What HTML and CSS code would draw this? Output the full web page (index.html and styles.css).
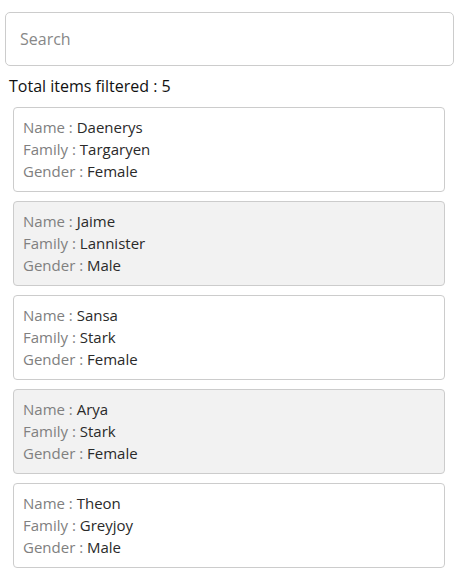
FILE: index.html
```html
<!DOCTYPE html>
<html lang="en">
<head>
  <meta charset="UTF-8">
  <title>Characters</title>
  <link rel="stylesheet" href="styles.css">
</head>
<body>
  <div class="app">
    <input class="search" type="text" placeholder="Search">

    <div class="total">Total items filtered : 5</div>

    <div class="list">
      <div class="card">
        <div class="line"><span class="label">Name : </span>Daenerys</div>
        <div class="line"><span class="label">Family : </span>Targaryen</div>
        <div class="line"><span class="label">Gender : </span>Female</div>
      </div>
      <div class="card">
        <div class="line"><span class="label">Name : </span>Jaime</div>
        <div class="line"><span class="label">Family : </span>Lannister</div>
        <div class="line"><span class="label">Gender : </span>Male</div>
      </div>
      <div class="card">
        <div class="line"><span class="label">Name : </span>Sansa</div>
        <div class="line"><span class="label">Family : </span>Stark</div>
        <div class="line"><span class="label">Gender : </span>Female</div>
      </div>
      <div class="card">
        <div class="line"><span class="label">Name : </span>Arya</div>
        <div class="line"><span class="label">Family : </span>Stark</div>
        <div class="line"><span class="label">Gender : </span>Female</div>
      </div>
      <div class="card">
        <div class="line"><span class="label">Name : </span>Theon</div>
        <div class="line"><span class="label">Family : </span>Greyjoy</div>
        <div class="line"><span class="label">Gender : </span>Male</div>
      </div>
    </div>
  </div>
</body>
</html>
```

FILE: styles.css
```css
* {
  box-sizing: border-box;
}
body {
  margin: 0;
  background-color: #fff;
  font-family: "Open Sans", "Liberation Sans", sans-serif;
  color: #222;
}
.app {
  padding: 12px 6px 0 5px;
}
.search {
  display: block;
  width: 100%;
  height: 54px;
  padding: 0 14px;
  border: 1px solid #ccc;
  border-radius: 5px;
  font-family: inherit;
  font-size: 16px;
  color: #333;
  outline: none;
}
.search::placeholder {
  color: #888;
}
.total {
  margin: 9px 0 10px 4px;
  font-size: 16px;
  line-height: 22px;
  color: #111;
}
.list {
  display: flex;
  flex-direction: column;
  gap: 9px;
  margin: 0 9px 0 8px;
}
.card {
  padding: 8px 9px 9px;
  border: 1px solid #ccc;
  border-radius: 4px;
  background-color: #fff;
}
.card:nth-child(even) {
  background-color: #f2f2f2;
}
.line {
  font-size: 15px;
  line-height: 22px;
  color: #2a2a2a;
}
.label {
  color: #808080;
}
```
